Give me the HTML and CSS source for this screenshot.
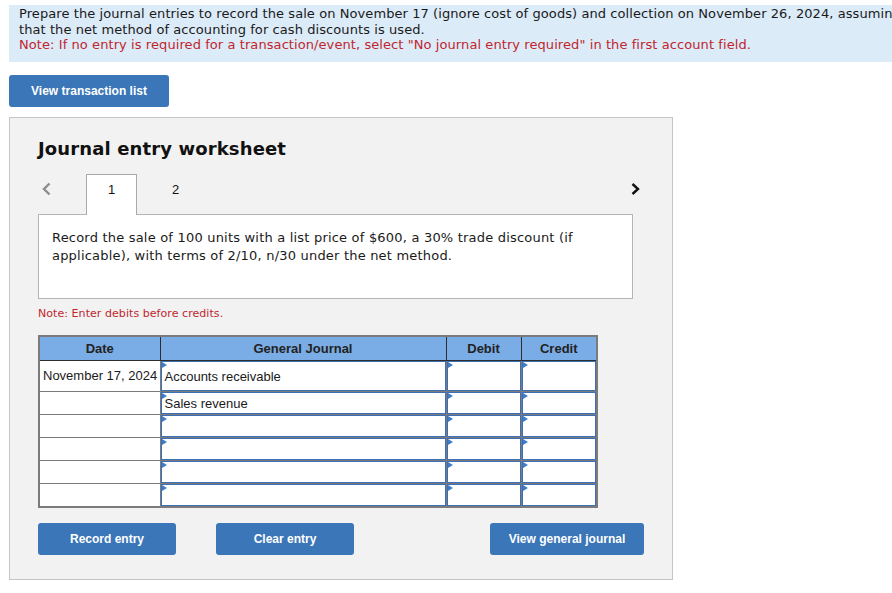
FILE: index.html
```html
<!DOCTYPE html>
<html lang="en">
<head>
<meta charset="utf-8">
<title>Journal entry worksheet</title>
<link rel="stylesheet" href="styles.css">
</head>
<body>
<div class="page">
  <div class="prompt">
    <p class="prompt-text">Prepare the journal entries to record the sale on November 17 (ignore cost of goods) and collection on November 26, 2024, assuming that the net method of accounting for cash discounts is used.</p>
    <p class="prompt-note">Note: If no entry is required for a transaction/event, select "No journal entry required" in the first account field.</p>
  </div>

  <button class="btn btn-list" type="button">View transaction list</button>

  <section class="worksheet">
    <h2 class="ws-title">Journal entry worksheet</h2>

    <div class="tabs">
      <span class="chev chev-left">
        <svg width="9" height="14" viewBox="0 0 9 14"><polyline points="7.5,1.5 2,7 7.5,12.5" fill="none" stroke="#8c8c8c" stroke-width="2.4"/></svg>
      </span>
      <span class="tab tab-active">1</span>
      <span class="tab">2</span>
      <span class="chev chev-right">
        <svg width="9" height="14" viewBox="0 0 9 14"><polyline points="1.5,2 7,7 1.5,12" fill="none" stroke="#111" stroke-width="2.4"/></svg>
      </span>
    </div>

    <div class="desc">Record the sale of 100 units with a list price of $600, a 30% trade discount (if applicable), with terms of 2/10, n/30 under the net method.</div>

    <p class="ws-note">Note: Enter debits before credits.</p>

    <table class="journal">
      <colgroup>
        <col class="c-date"><col class="c-acct"><col class="c-debit"><col class="c-credit">
      </colgroup>
      <thead>
        <tr><th>Date</th><th>General Journal</th><th>Debit</th><th>Credit</th></tr>
      </thead>
      <tbody>
        <tr class="row-first">
          <td class="date">November 17, 2024</td>
          <td class="cell"><div class="field">Accounts receivable</div></td>
          <td class="cell"><div class="field"></div></td>
          <td class="cell"><div class="field"></div></td>
        </tr>
        <tr>
          <td class="date"></td>
          <td class="cell"><div class="field">Sales revenue</div></td>
          <td class="cell"><div class="field"></div></td>
          <td class="cell"><div class="field"></div></td>
        </tr>
        <tr>
          <td class="date"></td>
          <td class="cell"><div class="field"></div></td>
          <td class="cell"><div class="field"></div></td>
          <td class="cell"><div class="field"></div></td>
        </tr>
        <tr>
          <td class="date"></td>
          <td class="cell"><div class="field"></div></td>
          <td class="cell"><div class="field"></div></td>
          <td class="cell"><div class="field"></div></td>
        </tr>
        <tr>
          <td class="date"></td>
          <td class="cell"><div class="field"></div></td>
          <td class="cell"><div class="field"></div></td>
          <td class="cell"><div class="field"></div></td>
        </tr>
        <tr>
          <td class="date"></td>
          <td class="cell"><div class="field"></div></td>
          <td class="cell"><div class="field"></div></td>
          <td class="cell"><div class="field"></div></td>
        </tr>
      </tbody>
    </table>

    <div class="actions">
      <button class="btn btn-record" type="button">Record entry</button>
      <button class="btn btn-clear" type="button">Clear entry</button>
      <button class="btn btn-view" type="button">View general journal</button>
    </div>
  </section>
</div>
</body>
</html>
```

FILE: styles.css
```css
html, body {
  margin: 0;
  padding: 0;
  overflow: hidden;
  background: #ffffff;
}

body {
  font-family: "DejaVu Sans", Verdana, sans-serif;
  color: #1a1a1a;
}

.page {
  padding: 5px 0 0 9px;
  width: 1000px;
}

/* Prompt banner */
.prompt {
  background: #dcebf8;
  width: 900px;
  padding: 1px 10px 9px 10px;
  font-size: 13px;
  line-height: 15.6px;
  letter-spacing: 0.08px;
}

.prompt p {
  margin: 0;
}

.prompt-note {
  color: #c0262e;
}

/* Buttons */
.btn {
  display: flex;
  align-items: center;
  justify-content: center;
  height: 32px;
  border: none;
  border-radius: 3px;
  background: #3a76b8;
  color: #ffffff;
  font-family: "Liberation Sans", Arial, sans-serif;
  font-weight: bold;
  font-size: 12px;
  padding: 0;
  cursor: pointer;
}

.btn-list {
  width: 160px;
  margin-top: 13px;
}

/* Worksheet panel */
.worksheet {
  box-sizing: border-box;
  width: 664px;
  margin-top: 10px;
  background: #f2f2f2;
  border: 1px solid #c6c6c6;
  padding: 20px 28px 24px 28px;
}

.ws-title {
  margin: 0;
  font-size: 18px;
  line-height: 22px;
  font-weight: bold;
  color: #111;
  letter-spacing: 0.13px;
}

/* Tabs */
.tabs {
  display: flex;
  align-items: flex-start;
  height: 41px;
  margin-top: 14px;
  margin-bottom: -1px;
  position: relative;
  z-index: 1;
}

.chev {
  display: block;
  height: 41px;
  box-sizing: border-box;
  padding-top: 8px;
}

.chev svg {
  display: block;
}

.chev-left {
  width: 48px;
  padding-left: 4px;
}

.chev-right {
  margin-left: auto;
  padding-right: 4px;
}

.tab {
  box-sizing: border-box;
  width: 51px;
  height: 41px;
  padding-top: 8px;
  text-align: center;
  font-family: "Liberation Sans", Arial, sans-serif;
  font-size: 13px;
  line-height: 16px;
  color: #111;
}

.tab + .tab {
  margin-left: 13px;
}

.tab-active {
  background: #ffffff;
  border: 1px solid #a9a9a9;
  border-bottom: none;
  padding-top: 7px;
}

/* Description */
.desc {
  box-sizing: border-box;
  width: 595px;
  height: 85px;
  background: #ffffff;
  border: 1px solid #b5b5b5;
  padding: 14px 13px 12px 13px;
  font-size: 13px;
  line-height: 18px;
  letter-spacing: 0.2px;
  color: #1a1a1a;
}

.ws-note {
  margin: 8px 0 0 0;
  font-size: 11px;
  line-height: 14px;
  letter-spacing: 0.06px;
  color: #c0262e;
}

/* Journal table */
.journal {
  margin-top: 14px;
  width: 558px;
  table-layout: fixed;
  border-collapse: collapse;
  border: 2px solid #7b7b7b;
  font-family: "Liberation Sans", Arial, sans-serif;
  font-size: 13px;
  color: #1a1a1a;
}

.c-date { width: 121px; }
.c-acct { width: 286px; }
.c-debit { width: 75px; }
.c-credit { width: 76px; }

.journal th {
  background: #7aade5;
  border: 1px solid #2d2d2d;
  height: 23px;
  padding: 0;
  font-weight: bold;
  color: #222;
  text-align: center;
  vertical-align: middle;
}

.journal td {
  border: 1px solid #7b7b7b;
  padding: 0;
  background: #ffffff;
  vertical-align: middle;
}

.journal td.date {
  padding-left: 3px;
  white-space: nowrap;
  height: 22px;
}

.row-first td.date {
  height: 30px;
}

.field {
  position: relative;
  box-sizing: border-box;
  height: 22px;
  border: 1px solid #3c6fb5;
  padding-left: 3px;
  padding-top: 1px;
  display: flex;
  align-items: center;
  white-space: nowrap;
  overflow: hidden;
}

.row-first .field {
  height: 30px;
}

.field::before {
  content: "";
  position: absolute;
  top: 0;
  left: 0;
  border-left: 5px solid #3d7cc9;
  border-top: 3px solid transparent;
  border-bottom: 3px solid transparent;
}

/* Actions */
.actions {
  display: flex;
  margin-top: 15px;
}

.btn-record,
.btn-clear {
  width: 138px;
}

.btn-clear {
  margin-left: 40px;
}

.btn-view {
  width: 154px;
  margin-left: auto;
}
```
